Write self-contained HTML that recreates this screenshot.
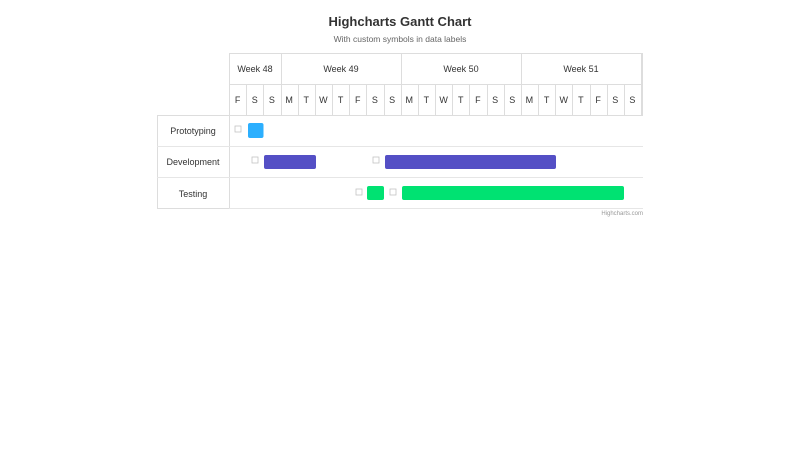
<!DOCTYPE html>
<html><head><meta charset="utf-8"><style>
body{margin:0;background:#fff;width:800px;height:450px;overflow:hidden;font-family:"Liberation Sans",sans-serif}
</style></head><body>
<svg width="800" height="450" xmlns="http://www.w3.org/2000/svg" font-family="Liberation Sans, sans-serif">
<text x="400" y="26" text-anchor="middle" font-size="13" font-weight="bold" fill="#333">Highcharts Gantt Chart</text>
<text x="400" y="42" text-anchor="middle" font-size="8.5" fill="#666">With custom symbols in data labels</text>
<g stroke="#ddd" stroke-width="1" fill="none">
<rect x="229.5" y="53.5" width="413" height="62"/>
<line x1="229" y1="84.5" x2="643" y2="84.5"/>
<line x1="281.5" y1="53" x2="281.5" y2="115"/>
<line x1="401.5" y1="53" x2="401.5" y2="115"/>
<line x1="521.5" y1="53" x2="521.5" y2="115"/>
<line x1="641.5" y1="53" x2="641.5" y2="115"/>
<rect x="157.5" y="115.5" width="72" height="93"/>
<line x1="157" y1="146.5" x2="643" y2="146.5" stroke="#e6e6e6"/>
<line x1="157" y1="177.5" x2="643" y2="177.5" stroke="#e6e6e6"/>
<line x1="229" y1="208.5" x2="643" y2="208.5" stroke="#e6e6e6"/>
</g>
<g id="days" stroke="#ddd"></g>
<g font-size="9" fill="#333" text-anchor="middle">
<text x="255" y="72">Week 48</text>
<text x="341" y="72">Week 49</text>
<text x="461" y="72">Week 50</text>
<text x="581" y="72">Week 51</text>
<text x="193" y="134">Prototyping</text>
<text x="193" y="165">Development</text>
<text x="193" y="197">Testing</text>
</g>
<g id="dl" font-size="9" fill="#333" text-anchor="middle"></g>
<rect x="248" y="123" width="15.5" height="15" rx="2" fill="#2caffe"/>
<rect x="264" y="155" width="52" height="14" rx="2" fill="#544fc5"/>
<rect x="385" y="155" width="171" height="14" rx="2" fill="#544fc5"/>
<rect x="367" y="186" width="17" height="14" rx="2" fill="#00e272"/>
<rect x="402" y="186" width="222" height="14" rx="2" fill="#00e272"/>
<g fill="#8a8" opacity="0.8">
<rect x="235" y="126" width="6" height="6" fill="none" stroke="#aaa" stroke-width="0.7"/>
<rect x="252" y="157" width="6" height="6" fill="none" stroke="#aaa" stroke-width="0.7"/>
<rect x="373" y="157" width="6" height="6" fill="none" stroke="#aaa" stroke-width="0.7"/>
<rect x="356" y="189" width="6" height="6" fill="none" stroke="#aaa" stroke-width="0.7"/>
<rect x="390" y="189" width="6" height="6" fill="none" stroke="#aaa" stroke-width="0.7"/>
</g>
<text x="643" y="215" text-anchor="end" font-size="6" fill="#999">Highcharts.com</text>
<script>
var d="FSSMTWTFSSMTWTFSSMTWTFSS",g=document.getElementById('days'),t=document.getElementById('dl'),ns="http://www.w3.org/2000/svg",w=412/24;
for(var i=0;i<24;i++){var x=229+w*i;
if(i>0){var l=document.createElementNS(ns,'line');l.setAttribute('x1',Math.round(x)+.5);l.setAttribute('x2',Math.round(x)+.5);l.setAttribute('y1',84);l.setAttribute('y2',115);g.appendChild(l);}
var e=document.createElementNS(ns,'text');e.setAttribute('x',x+w/2);e.setAttribute('y',103);e.textContent=d[i];t.appendChild(e);}
</script>
</svg>
</body></html>
